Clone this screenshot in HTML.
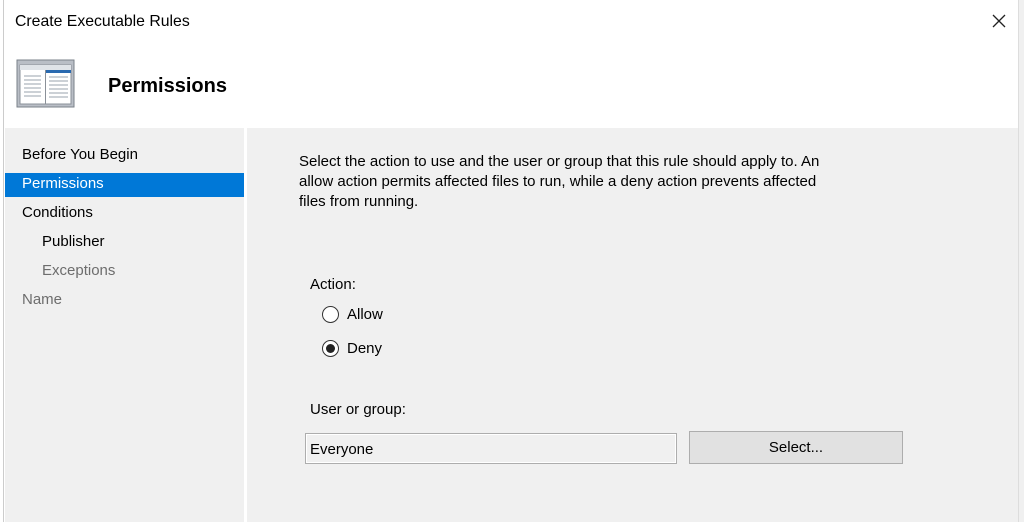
<!DOCTYPE html>
<html><head><meta charset="utf-8"><style>
*{margin:0;padding:0;box-sizing:border-box}
body{width:1024px;height:522px;overflow:hidden;background:#fff;font-family:"Liberation Sans",sans-serif;font-size:15px;color:#000;position:relative}
.a{position:absolute}
.lstrip{left:0;top:0;width:4px;height:522px;background:#fff;border-right:1px solid #ccc}
.hdr{left:5px;top:0;width:1013px;height:128px;background:#fff}
.nav{left:5px;top:128px;width:239px;height:394px;background:#f0f0f0}
.div{left:244px;top:128px;width:3px;height:394px;background:#fff}
.main{left:247px;top:128px;width:771px;height:394px;background:#f0f0f0}
.rstrip{left:1018px;top:0;width:6px;height:522px;background:#f0f0f0;border-left:1px solid #ddd}
.sel{left:5px;top:173px;width:239px;height:24px;background:#0078d7}
.t{white-space:nowrap}
.radio{width:17px;height:17px;border:1px solid #333;border-radius:50%;background:#fff}
.dot{left:3px;top:3px;width:9px;height:9px;border-radius:50%;background:#222}
</style></head><body>
<div class="a lstrip"></div>
<div class="a hdr"></div>
<div class="a nav"></div>
<div class="a div"></div>
<div class="a main"></div>
<div class="a rstrip"></div>
<div class="a t" style="left:15px;top:13px;font-size:15.8px">Create Executable Rules</div>
<svg class="a" style="left:992px;top:14px" width="14" height="14" viewBox="0 0 14 14"><path d="M1 1L13 13M13 1L1 13" stroke="#222" stroke-width="1.3"/></svg>
<svg class="a" style="left:16px;top:59px" width="60" height="50" viewBox="0 0 60 50">
<rect x="1" y="1" width="57" height="47" fill="#b9bec6" stroke="#7a818a"/>
<rect x="4" y="6" width="51" height="39" fill="#fff" stroke="#8a9098"/>
<rect x="4" y="6" width="51" height="5" fill="#dfe3e8"/>
<rect x="30" y="11" width="25" height="3" fill="#2a6ab0"/>
<line x1="29.5" y1="11" x2="29.5" y2="45" stroke="#8a9098"/>
<g stroke="#9aa3ad"><line x1="8" y1="17" x2="25" y2="17"/><line x1="8" y1="21" x2="25" y2="21"/><line x1="8" y1="25" x2="25" y2="25"/><line x1="8" y1="29" x2="25" y2="29"/><line x1="8" y1="33" x2="25" y2="33"/><line x1="8" y1="37" x2="25" y2="37"/>
<line x1="33" y1="18" x2="52" y2="18"/><line x1="33" y1="22" x2="52" y2="22"/><line x1="33" y1="26" x2="52" y2="26"/><line x1="33" y1="30" x2="52" y2="30"/><line x1="33" y1="34" x2="52" y2="34"/><line x1="33" y1="38" x2="52" y2="38"/></g>
</svg>
<div class="a t" style="left:108px;top:75px;font-size:20px;font-weight:bold">Permissions</div>
<div class="a sel"></div>
<div class="a t" style="left:22px;top:146px">Before You Begin</div>
<div class="a t" style="left:22px;top:175px;color:#fff">Permissions</div>
<div class="a t" style="left:22px;top:204px">Conditions</div>
<div class="a t" style="left:42px;top:233px">Publisher</div>
<div class="a t" style="left:42px;top:262px;color:#6d6d6d">Exceptions</div>
<div class="a t" style="left:22px;top:291px;color:#6d6d6d">Name</div>
<div class="a" style="left:299px;top:152px;width:535px;line-height:20px">Select the action to use and the user or group that this rule should apply to. An allow action permits affected files to run, while a deny action prevents affected files from running.</div>
<div class="a t" style="left:310px;top:276px">Action:</div>
<div class="a radio" style="left:322px;top:306px"></div>
<div class="a t" style="left:347px;top:306px">Allow</div>
<div class="a radio" style="left:322px;top:340px"><div class="a dot"></div></div>
<div class="a t" style="left:347px;top:340px">Deny</div>
<div class="a t" style="left:310px;top:401px">User or group:</div>
<div class="a" style="left:305px;top:433px;width:372px;height:31px;border:1px solid #adadad;background:#f0f0f0;box-shadow:inset 0 0 0 1px #fff"></div>
<div class="a t" style="left:310px;top:441px">Everyone</div>
<div class="a" style="left:689px;top:431px;width:214px;height:33px;border:1px solid #adadad;background:#e1e1e1"></div>
<div class="a t" style="left:689px;top:439px;width:214px;text-align:center">Select...</div>
</body></html>
